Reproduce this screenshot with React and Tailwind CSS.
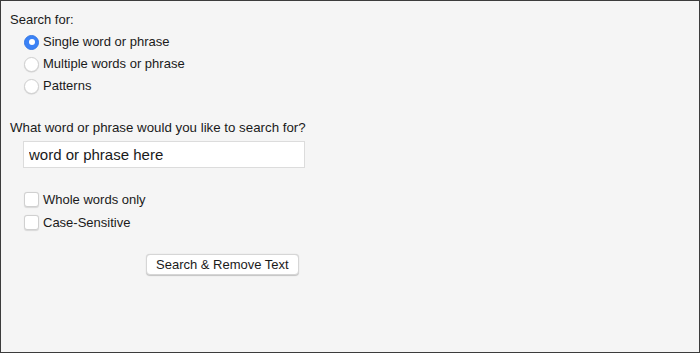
import React, { useState } from 'react';

const Radio = ({ checked, label, onClick }) => (
  <label className="flex items-center h-[22px] cursor-default" onClick={onClick}>
    <span
      className={`w-[15px] h-[15px] rounded-full flex items-center justify-center ${
        checked ? 'bg-[#3b82f6] border border-[#3478e5]' : 'bg-white border border-[#d0d0d0] shadow-[0_0.5px_1px_rgba(0,0,0,0.15)]'
      }`}
    >
      {checked && <span className="w-[6px] h-[6px] rounded-full bg-white" />}
    </span>
    <span className="ml-[4px]">{label}</span>
  </label>
);

const Check = ({ checked, label, onClick }) => (
  <label className="flex items-center h-[23px] cursor-default" onClick={onClick}>
    <span className="w-[15px] h-[15px] rounded-[3px] bg-white border border-[#d0d0d0] shadow-[0_0.5px_1px_rgba(0,0,0,0.12)] flex items-center justify-center text-[10px] text-[#3b82f6]">
      {checked ? '✓' : ''}
    </span>
    <span className="ml-[4px]">{label}</span>
  </label>
);

const App = () => {
  const [mode, setMode] = useState('single');
  const [whole, setWhole] = useState(false);
  const [caseSens, setCaseSens] = useState(false);

  return (
    <div
      className="w-[700px] h-[353px] bg-[#f5f5f5] border border-[#3c3c3c] text-[13px] text-[#1a1a1a] overflow-hidden"
      style={{ fontFamily: '"Liberation Sans", Arial, sans-serif' }}
    >
      <div className="pl-[9px] pt-[11px]">
        <div className="leading-[16px]">Search for:</div>
        <div className="pl-[14px] mt-[3px]">
          <Radio checked={mode === 'single'} label="Single word or phrase" onClick={() => setMode('single')} />
          <Radio checked={mode === 'multi'} label="Multiple words or phrase" onClick={() => setMode('multi')} />
          <Radio checked={mode === 'pattern'} label="Patterns" onClick={() => setMode('pattern')} />
        </div>

        <div className="mt-[23px] leading-[16px] text-[13.3px]">What word or phrase would you like to search for?</div>
        <div className="pl-[13px] mt-[5px]">
          <input
            defaultValue="word or phrase here"
            className="w-[282px] h-[27px] bg-white border border-[#dcdcdc] px-[5px] text-[15px] text-[#1a1a1a] outline-none"
            style={{ fontFamily: '"Liberation Sans", Arial, sans-serif' }}
          />
        </div>

        <div className="pl-[14px] mt-[20px]">
          <Check checked={whole} label="Whole words only" onClick={() => setWhole(!whole)} />
          <Check checked={caseSens} label="Case-Sensitive" onClick={() => setCaseSens(!caseSens)} />
        </div>

        <div className="mt-[20px] pl-[136px]">
          <button className="h-[21px] px-[9px] bg-white rounded-[4px] border border-[#d6d6d6] shadow-[0_0.5px_1px_rgba(0,0,0,0.2)] text-[13px] text-[#1a1a1a] leading-none">
            Search &amp; Remove Text
          </button>
        </div>
      </div>
    </div>
  );
};

export default App;
